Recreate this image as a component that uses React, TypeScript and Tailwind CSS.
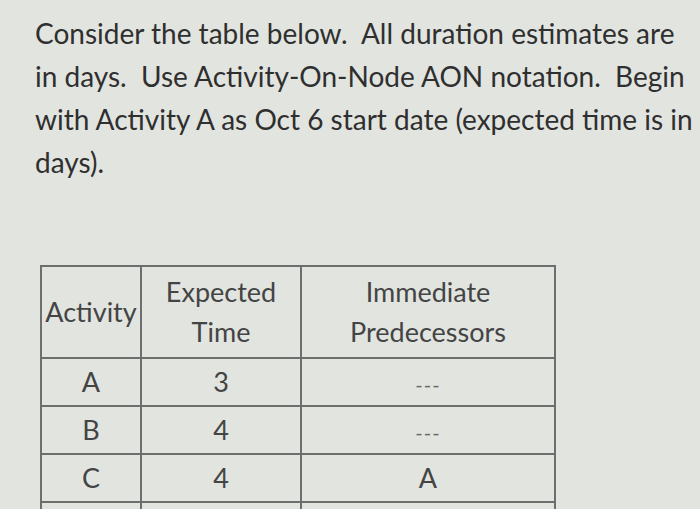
const rows = [
  { act: 'A', time: '3', pred: '---' },
  { act: 'B', time: '4', pred: '---' },
  { act: 'C', time: '4', pred: 'A' },
];

export default function App() {
  return (
    <div className="h-[509px] w-[700px] overflow-hidden bg-[#e2e4e0] font-['Lato','Open_Sans',sans-serif] text-[#2f2f2f]">
      <p className="whitespace-pre pl-[35px] pt-[12px] text-[28px] leading-[43px]">
        {'Consider the table below.  All duration estimates are\nin days.  Use Activity-On-Node AON notation.  Begin\nwith Activity A as Oct 6 start date (expected time is in\ndays).'}
      </p>

      <table className="ml-[40px] mt-[81px] w-[516px] border-collapse text-[27px] text-[#444]">
        <tbody>
          <tr className="h-[92px]">
            <td className="w-[100px] border-2 border-[#6e6e6e] text-center leading-[40px]">Activity</td>
            <td className="w-[160px] border-2 border-[#6e6e6e] text-center leading-[40px]">
              Expected
              <br />
              Time
            </td>
            <td className="border-2 border-[#6e6e6e] text-center leading-[40px]">
              Immediate
              <br />
              Predecessors
            </td>
          </tr>
          {rows.map((r) => (
            <tr key={r.act} className="h-[48px]">
              <td className="border-2 border-[#6e6e6e] text-center">{r.act}</td>
              <td className="border-2 border-[#6e6e6e] text-center">{r.time}</td>
              <td className="border-2 border-[#6e6e6e] text-center">
                {r.pred === '---' ? <span className="text-[20px] tracking-[1px] text-[#666]">---</span> : r.pred}
              </td>
            </tr>
          ))}
          <tr className="h-[48px]">
            <td className="border-2 border-[#6e6e6e]" />
            <td className="border-2 border-[#6e6e6e]" />
            <td className="border-2 border-[#6e6e6e]" />
          </tr>
        </tbody>
      </table>
    </div>
  );
}
